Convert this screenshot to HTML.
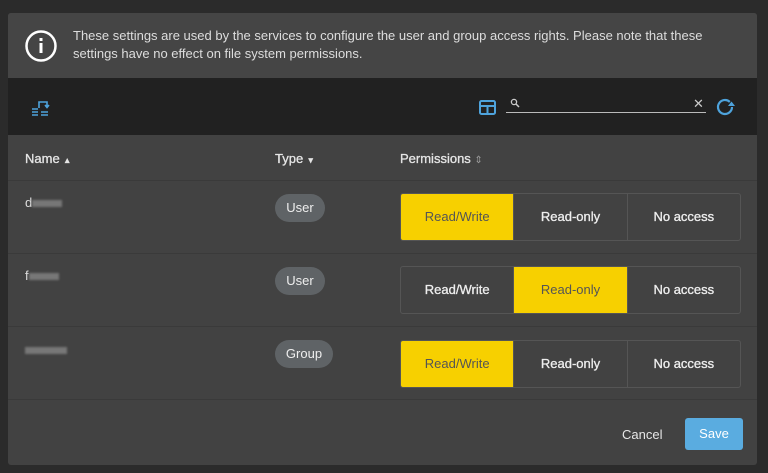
<!DOCTYPE html>
<html><head><style>
body{margin:0;width:768px;height:473px;background:#2b2b2b;font-family:"Liberation Sans",sans-serif;overflow:hidden;position:relative}
.dlg{position:absolute;left:8px;top:13px;width:749px;height:452px;background:#424242;border-radius:3px;overflow:hidden}
.info{position:absolute;left:0;top:0;width:749px;height:65px;background:#454545}
.info p{position:absolute;left:65px;top:14px;margin:0;color:#ddd;font-size:13px;line-height:18px;width:670px}
.tb{position:absolute;left:0;top:65px;width:749px;height:57px;background:#212121}
.abs{position:absolute}
.hdr{color:#e6e6e6;font-size:13px;top:138px;-webkit-text-stroke:0.3px #e6e6e6}
.line{position:absolute;left:0;width:749px;height:1px;background:#3a3a3a}
.name{color:#ddd;font-size:13px;left:17px}
.blur{display:inline-block;width:30px;height:7px;background:#777;vertical-align:middle;filter:blur(1px)}
.chip{position:absolute;left:267px;height:28px;border-radius:14px;background:#5f6366;color:#eee;font-size:13px;line-height:28px;text-align:center}
.grp{position:absolute;left:392px;width:339px;height:46px;border:1px solid #555;border-radius:3px;display:flex;overflow:hidden}
.grp div{flex:1;text-align:center;line-height:46px;color:#eee;font-size:13px;-webkit-text-stroke:0.3px #eee;border-left:1px solid #555}
.grp div:first-child{border-left:none}
.grp .on{background:#f7d000;color:#555;-webkit-text-stroke:0}
</style></head><body>
<div class="dlg">
 <div class="info">
  <svg class="abs" style="left:16px;top:16px" width="34" height="34" viewBox="0 0 34 34"><circle cx="17" cy="17" r="14.5" fill="none" stroke="#fff" stroke-width="2.5"/><rect x="15.5" y="14" width="3" height="10" fill="#fff"/><rect x="15.5" y="9" width="3" height="3" fill="#fff"/></svg>
  <p>These settings are used by the services to configure the user and group access rights. Please note that these settings have no effect on file system permissions.</p>
 </div>
 <div class="tb">
  <svg class="abs" style="left:23px;top:22px" width="20" height="18" viewBox="0 0 20 18"><path d="M8 8V2h8v5M14 5l2 2.5 2-2.5" fill="none" stroke="#4ea3dc" stroke-width="1.6"/><path d="M1 9h6M1 12h6M1 15h6M10 12h7M10 15h7" stroke="#4ea3dc" stroke-width="1.6"/></svg>
  <svg class="abs" style="left:471px;top:22px" width="17" height="15" viewBox="0 0 17 15"><rect x="1" y="1" width="15" height="13" rx="1.5" fill="none" stroke="#4ea3dc" stroke-width="2"/><path d="M1 6h15M8.5 6v8" stroke="#4ea3dc" stroke-width="2"/></svg>
  <svg class="abs" style="left:502px;top:20px" width="10" height="10" viewBox="0 0 10 10"><circle cx="4" cy="4" r="2.6" fill="none" stroke="#ccc" stroke-width="1.3"/><path d="M6 6l3 3" stroke="#ccc" stroke-width="1.5"/></svg>
  <div class="abs" style="left:498px;top:34px;width:200px;height:1px;background:#bbb"></div>
  <div class="abs" style="left:685px;top:18px;color:#ccc;font-size:13px">✕</div>
  <svg class="abs" style="left:706px;top:18px" width="22" height="22" viewBox="0 0 22 22"><path d="M18 11a7 7 0 1 1-2.2-5.1" fill="none" stroke="#4ea3dc" stroke-width="2.2"/><path d="M14 10h7l-3.5-4.5z" fill="#4ea3dc"/></svg>
 </div>
 <div class="abs hdr" style="left:17px">Name <span style="font-size:8px">▲</span></div>
 <div class="abs hdr" style="left:267px">Type <span style="font-size:8px">▼</span></div>
 <div class="abs hdr" style="left:392px">Permissions <span style="font-size:10px;color:#999;-webkit-text-stroke:0">⇕</span></div>
 <div class="line" style="top:167px"></div>
 <div class="abs name" style="top:182px">d<span class="blur"></span></div>
 <div class="chip" style="top:181px;width:50px">User</div>
 <div class="grp" style="top:180px"><div class="on">Read/Write</div><div>Read-only</div><div>No access</div></div>
 <div class="line" style="top:240px"></div>
 <div class="abs name" style="top:255px">f<span class="blur"></span></div>
 <div class="chip" style="top:254px;width:50px">User</div>
 <div class="grp" style="top:253px"><div>Read/Write</div><div class="on">Read-only</div><div>No access</div></div>
 <div class="line" style="top:313px"></div>
 <div class="abs name" style="top:329px"><span class="blur" style="width:42px"></span></div>
 <div class="chip" style="top:327px;width:58px">Group</div>
 <div class="grp" style="top:327px"><div class="on">Read/Write</div><div>Read-only</div><div>No access</div></div>
 <div class="line" style="top:386px"></div>
 <div class="abs" style="left:614px;top:414px;color:#e6e6e6;font-size:13px">Cancel</div>
 <div class="abs" style="left:677px;top:405px;width:58px;height:32px;background:#5aace0;border-radius:3px;color:#fff;font-size:13px;line-height:32px;text-align:center">Save</div>
</div>
</body></html>
